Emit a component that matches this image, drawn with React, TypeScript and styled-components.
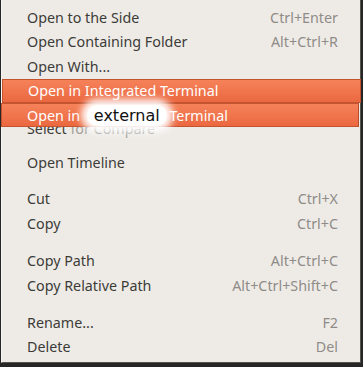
import React from 'react'
import styled, { createGlobalStyle } from 'styled-components'

const GlobalStyle = createGlobalStyle`
  html, body {
    margin: 0;
    padding: 0;
    background: #262626;
    width: 363px;
    height: 367px;
    overflow: hidden;
  }
`

interface IItem {
  label: string
  shortcut?: string
  active?: boolean
}

const topItems: IItem[] = [
  { label: 'Open to the Side', shortcut: 'Ctrl+Enter' },
  { label: 'Open Containing Folder', shortcut: 'Alt+Ctrl+R' },
  { label: 'Open With...' },
  { label: 'Open in Integrated Terminal', active: true },
]

const groups: { gap: number; items: IItem[] }[] = [
  { gap: 10, items: [{ label: 'Open Timeline' }] },
  {
    gap: 11.5,
    items: [
      { label: 'Cut', shortcut: 'Ctrl+X' },
      { label: 'Copy', shortcut: 'Ctrl+C' },
    ],
  },
  {
    gap: 13,
    items: [
      { label: 'Copy Path', shortcut: 'Alt+Ctrl+C' },
      { label: 'Copy Relative Path', shortcut: 'Alt+Ctrl+Shift+C' },
    ],
  },
  {
    gap: 12.5,
    items: [
      { label: 'Rename...', shortcut: 'F2' },
      { label: 'Delete', shortcut: 'Del' },
    ],
  },
]

function App() {
  return (
    <Screen>
      <GlobalStyle />
      <Menu>
        {topItems.map((item) => (
          <Row key={item.label} active={item.active}>
            <Label>{item.label}</Label>
            {item.shortcut && <Shortcut>{item.shortcut}</Shortcut>}
          </Row>
        ))}
        <DragRow>
          <Label>
            Open in <Bubble>external</Bubble> Terminal
          </Label>
        </DragRow>
        <HiddenRow>
          <Label>
            Select <Faded>for Compare</Faded>
          </Label>
        </HiddenRow>
        {groups.map((group, i) => (
          <Group key={i} gap={group.gap}>
            {group.items.map((item) => (
              <Row key={item.label}>
                <Label>{item.label}</Label>
                {item.shortcut && <Shortcut>{item.shortcut}</Shortcut>}
              </Row>
            ))}
          </Group>
        ))}
      </Menu>
    </Screen>
  )
}

export default App

const Screen = styled.div`
  width: 363px;
  height: 367px;
  padding-left: 1px;
  box-sizing: border-box;
  font-family: 'Noto Sans', 'Open Sans', sans-serif;
  font-size: 14.3px;
`

const Menu = styled.div`
  width: 360px;
  height: 363px;
  box-sizing: border-box;
  background: #eeebe7;
  border-left: 1px solid #f8f6f3;
  border-right: 1px solid #57544f;
  border-bottom: 1px solid #57544f;
  padding: 5px 0 4px;
  display: flex;
  flex-direction: column;
`

const Row = styled.div<{ active?: boolean }>`
  height: 24.5px;
  flex: none;
  box-sizing: border-box;
  display: flex;
  align-items: center;
  justify-content: space-between;
  padding: 0 22px 0 25px;
  color: ${(p) => (p.active ? '#ffffff' : '#3c3b37')};
  ${(p) =>
    p.active &&
    `
    background: linear-gradient(#f6825a, #eb6840);
    border: 1px solid #c4532f;
    margin-right: -1px;
  `}
`

const DragRow = styled.div`
  position: relative;
  z-index: 1;
  height: 24px;
  flex: none;
  box-sizing: border-box;
  display: flex;
  align-items: center;
  margin: 0 1px 0 -1px;
  padding: 0 22px 0 25px;
  color: #ffffff;
  background: linear-gradient(#f6825a, #eb6840);
  border: 1px solid #c4532f;
  border-right-color: #b84c2a;
`

const HiddenRow = styled.div`
  height: 24.5px;
  flex: none;
  margin-top: -11px;
  display: flex;
  align-items: center;
  padding: 0 22px 0 25px;
  color: #3c3b37;
`

const Group = styled.div<{ gap: number }>`
  margin-top: ${(p) => p.gap}px;
  display: flex;
  flex-direction: column;
`

const Label = styled.span`
  white-space: pre;
`

const Shortcut = styled.span`
  color: #8f8c87;
`

const Faded = styled.span`
  color: #a19e99;
`

const Bubble = styled.span`
  display: inline-block;
  font-family: 'DejaVu Sans', sans-serif;
  font-size: 16px;
  color: #111111;
  background: #ffffff;
  border-radius: 12px;
  padding: 1px 7px;
  margin: 0 -1px 0 3px;
  box-shadow: 0 0 7px 6px rgba(255, 255, 255, 0.95);
`
